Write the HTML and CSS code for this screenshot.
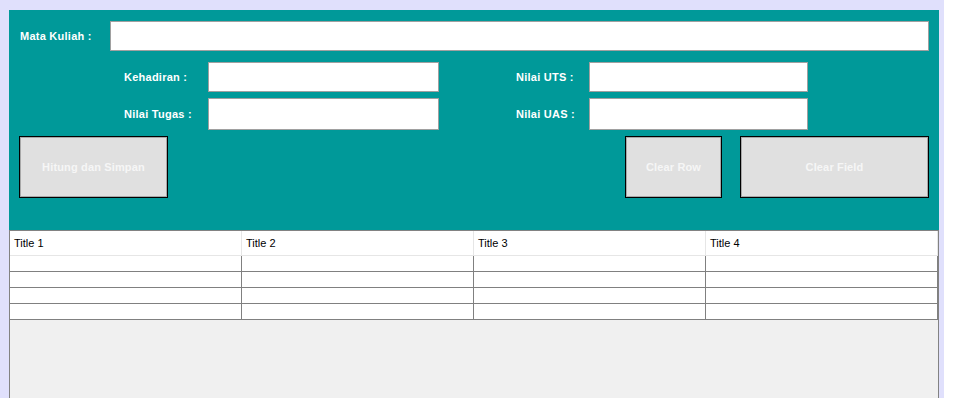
FILE: index.html
```html
<!DOCTYPE html>
<html lang="en">
<head>
    <meta charset="UTF-8">
    <meta name="viewport" content="width=device-width, initial-scale=1.0">
    <title>Input Nilai Mahasiswa</title>
    <link rel="stylesheet" href="styles.css">
</head>
<body>
    <div class="window">
        <div class="form-panel">
            <div class="row-matkul">
                <label class="label label-matkul" for="matkul">Mata Kuliah :</label>
                <input type="text" class="field field-wide" id="matkul">
            </div>

            <div class="grid-nilai">
                <label class="label" for="hadir">Kehadiran :</label>
                <input type="text" class="field" id="hadir">
                <span></span>
                <label class="label" for="uts">Nilai UTS :</label>
                <input type="text" class="field" id="uts">

                <label class="label" for="tugas">Nilai Tugas :</label>
                <input type="text" class="field field-tall" id="tugas">
                <span></span>
                <label class="label" for="uas">Nilai UAS :</label>
                <input type="text" class="field field-tall" id="uas">
            </div>

            <div class="button-row">
                <button class="btn btn-hitung">Hitung dan Simpan</button>
                <button class="btn btn-row">Clear Row</button>
                <button class="btn btn-field">Clear Field</button>
            </div>
        </div>

        <div class="table-pane">
            <table class="data-table">
                <thead>
                    <tr>
                        <th>Title 1</th>
                        <th>Title 2</th>
                        <th>Title 3</th>
                        <th>Title 4</th>
                    </tr>
                </thead>
                <tbody>
                    <tr><td></td><td></td><td></td><td></td></tr>
                    <tr><td></td><td></td><td></td><td></td></tr>
                    <tr><td></td><td></td><td></td><td></td></tr>
                    <tr><td></td><td></td><td></td><td></td></tr>
                </tbody>
            </table>
        </div>
    </div>
</body>
</html>
```

FILE: styles.css
```css
* { margin: 0; padding: 0; box-sizing: border-box; }

html, body {
    height: 100%;
    overflow: hidden;
    background: #ffffff;
}

body {
    font-family: 'Liberation Sans', Arial, sans-serif;
    font-size: 11px;
}

.window {
    width: 944px;
    height: 100vh;
    background: #e0e0fc;
    padding: 10px 5px 0 9px;
    display: flex;
    flex-direction: column;
}

.form-panel {
    background: #009999;
    padding: 11px 10px 32px 10px;
}

.label {
    color: #ffffff;
    font-weight: bold;
    font-size: 11px;
    letter-spacing: 0.25px;
    display: flex;
    align-items: center;
}

.field {
    border: 1px solid #a0a0a0;
    background: #ffffff;
    height: 30px;
    outline: none;
}

.field-tall {
    height: 32px;
}

.row-matkul {
    display: flex;
    align-items: center;
    padding-left: 1px;
}

.label-matkul {
    width: 90px;
}

.field-wide {
    flex: 1;
}

.grid-nilai {
    display: grid;
    grid-template-columns: 84px 231px 77px 73px 219px;
    grid-template-rows: 30px 32px;
    row-gap: 6px;
    margin: 11px 0 0 105px;
}

.button-row {
    display: flex;
    gap: 18px;
    margin-top: 6px;
}

.btn {
    height: 62px;
    background: #e0e0e0;
    border: 1px solid #000000;
    box-shadow: inset 0 0 0 1px #a8a8a8;
    color: #f6f6f6;
    font-family: 'Liberation Sans', Arial, sans-serif;
    font-weight: bold;
    font-size: 11px;
    letter-spacing: 0.15px;
}

.btn-hitung { width: 149px; }
.btn-row { width: 97px; margin-left: auto; }
.btn-field { width: 189px; }

.table-pane {
    flex: 1;
    background: #f0f0f0;
    border: 1px solid #828282;
    border-bottom: none;
}

.data-table {
    border-collapse: separate;
    border-spacing: 0;
    table-layout: fixed;
    width: 928px;
}

.data-table th,
.data-table td {
    width: 232px;
    background: #ffffff;
    text-align: left;
}

.data-table th {
    height: 25px;
    font-weight: normal;
    color: #000000;
    padding: 0 0 0 4px;
    border-right: 1px solid #e6e6e6;
    border-bottom: 1px solid #e6e6e6;
}

.data-table td {
    height: 16px;
    border-right: 1px solid #808080;
    border-bottom: 1px solid #808080;
}
```
